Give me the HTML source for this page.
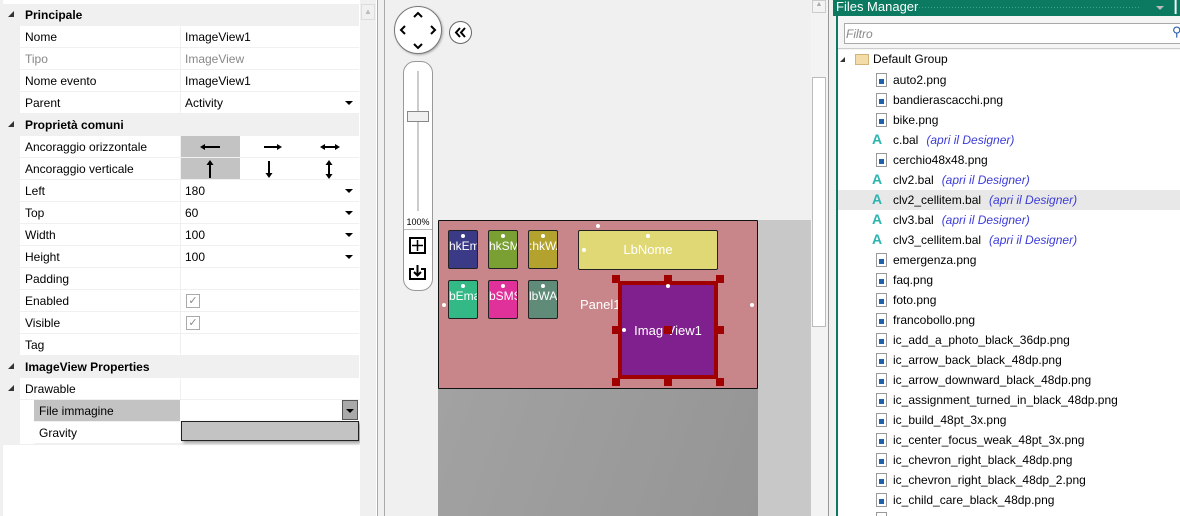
<!DOCTYPE html>
<html style="overflow:hidden;width:1180px;height:516px"><head><meta charset="utf-8"><style>
*{margin:0;padding:0;box-sizing:border-box}
body{width:1180px;height:516px;overflow:hidden;position:relative;background:#f0f0f0;font-family:"Segoe UI","Liberation Sans",sans-serif;font-size:12px;color:#000}
.a{position:absolute}
.r{position:absolute;left:20px;width:339px;height:22px;border-bottom:1px solid #f0f0f0;background:#fff}
.r .l{position:absolute;left:5px;top:4px;white-space:nowrap}
.r .v{position:absolute;left:165px;top:4px;white-space:nowrap}
.r .c{position:absolute;left:160px;top:0;width:1px;height:22px;background:#f0f0f0}
.h{position:absolute;left:20px;width:339px;height:22px;background:#f0f0f0;font-weight:bold}
.h span{position:absolute;left:5px;top:4px}
.tri{position:absolute;left:8px;width:0;height:0;border-left:6px solid transparent;border-bottom:6px solid #333}
.dd{position:absolute;right:6px;top:9px;width:0;height:0;border-left:4px solid transparent;border-right:4px solid transparent;border-top:4px solid #000}
.chk{position:absolute;left:166px;top:4px;width:14px;height:14px;border:1px solid #aaa;color:#888;font-size:11px;line-height:12px;text-align:center}
.f{position:absolute;left:876px;height:20px;white-space:nowrap;font-size:12px}
.f i{position:absolute;left:0;top:3px;width:11px;height:14px;border:1px solid #999;background:#fff}
.f i:after{content:"";position:absolute;left:2px;top:5px;width:5px;height:5px;background:#1d5fa8}
.f b{position:absolute;left:-4px;top:1px;font-weight:bold;color:#2bb4b0;font-size:14px;font-style:normal}
.f span{position:absolute;left:17px;top:3px}
.f em{color:#3b3bd8;margin-left:8px}
.dot{position:absolute;width:4px;height:4px;border-radius:2px;background:#fff}
.hd{position:absolute;width:8px;height:8px;background:#a00000}
.sm{position:absolute;width:30px;height:39px;border:1px solid #222;border-radius:2px;color:#fff;font-size:12px;overflow:hidden;text-align:center;line-height:30px}
</style></head><body>
<div class="a" style="left:0;top:0;width:378px;height:516px;background:#fff;border-left:3px solid #f0f0f0;border-right:1px solid #aaa"></div>
<div class="a" style="left:3px;top:4px;width:17px;height:440px;background:#f0f0f0"></div>
<div class="a" style="left:3px;top:444px;width:356px;height:1px;background:#f0f0f0"></div>
<div class="h" style="top:4px"><span>Principale</span></div><div class="tri" style="top:11px"></div>
<div class="r" style="top:26px"><div class="c"></div><span class="l">Nome</span><span class="v">ImageView1</span></div>
<div class="r" style="top:48px;color:#888"><div class="c"></div><span class="l">Tipo</span><span class="v">ImageView</span></div>
<div class="r" style="top:70px"><div class="c"></div><span class="l">Nome evento</span><span class="v">ImageView1</span></div>
<div class="r" style="top:92px"><div class="c"></div><span class="l">Parent</span><span class="v">Activity</span><div class="dd"></div></div>
<div class="h" style="top:114px"><span>Proprietà comuni</span></div><div class="tri" style="top:121px"></div>
<div class="r" style="top:136px"><div class="c"></div><span class="l">Ancoraggio orizzontale</span>
<div class="a" style="left:161px;top:0;width:59px;height:21px;background:#c3c3c3"></div>
<svg class="a" style="left:180px;top:5px" width="150" height="12"><g stroke="#000" stroke-width="2" fill="#000"><path d="M4 6h16"/><path d="M0 6l5-3v6z" stroke-width="0"/><path d="M64 6h14"/><path d="M82 6l-5-3v6z" stroke-width="0"/><path d="M124 6h12"/><path d="M120 6l5-3v6zM140 6l-5-3v6z" stroke-width="0"/></g></svg></div>
<div class="r" style="top:158px"><div class="c"></div><span class="l">Ancoraggio verticale</span>
<div class="a" style="left:161px;top:0;width:59px;height:21px;background:#c3c3c3"></div>
<svg class="a" style="left:185px;top:2px" width="150" height="19"><g stroke="#000" stroke-width="2" fill="#000"><path d="M5 4v14"/><path d="M5 0l-3.5 5h7z" stroke-width="0"/><path d="M64 1v13"/><path d="M64 18l-3.5-5h7z" stroke-width="0"/><path d="M124 4v11"/><path d="M124 0l-3.5 5h7zM124 19l-3.5-5h7z" stroke-width="0"/></g></svg></div>
<div class="r" style="top:180px"><div class="c"></div><span class="l">Left</span><span class="v">180</span><div class="dd"></div></div>
<div class="r" style="top:202px"><div class="c"></div><span class="l">Top</span><span class="v">60</span><div class="dd"></div></div>
<div class="r" style="top:224px"><div class="c"></div><span class="l">Width</span><span class="v">100</span><div class="dd"></div></div>
<div class="r" style="top:246px"><div class="c"></div><span class="l">Height</span><span class="v">100</span><div class="dd"></div></div>
<div class="r" style="top:268px"><div class="c"></div><span class="l">Padding</span></div>
<div class="r" style="top:290px"><div class="c"></div><span class="l">Enabled</span><div class="chk">✓</div></div>
<div class="r" style="top:312px"><div class="c"></div><span class="l">Visible</span><div class="chk">✓</div></div>
<div class="r" style="top:334px"><div class="c"></div><span class="l">Tag</span></div>
<div class="h" style="top:356px"><span>ImageView Properties</span></div><div class="tri" style="top:363px"></div>
<div class="r" style="top:378px"><div class="c"></div><span class="l">Drawable</span></div><div class="tri" style="top:385px"></div>
<div class="r" style="top:400px;left:34px;width:325px"><div class="a" style="left:0;top:0;width:146px;height:21px;background:#c3c3c3"></div><span class="l">File immagine</span>
<div class="a" style="left:308px;top:0;width:16px;height:20px;background:#aaa;border:1px solid #555"><div class="dd" style="right:3px;top:8px"></div></div></div>
<div class="r" style="top:422px;left:34px;width:325px"><span class="l">Gravity</span></div>
<div class="a" style="left:181px;top:421px;width:178px;height:20px;background:#c3c3c3;border:1px solid #222;box-shadow:2px 2px 3px #999"></div>
<div class="a" style="left:360px;top:0;width:16px;height:516px;background:#f0f0f0"></div>
<div class="a" style="left:361px;top:4px;width:14px;height:16px;border:1px solid #ddd;color:#bbb;font-size:8px;text-align:center;line-height:14px">▲</div>
<div class="a" style="left:384px;top:0;width:1px;height:516px;background:#aaa"></div>
<div class="a" style="left:385px;top:0;width:426px;height:516px;background:#f0f0f0"></div>
<div class="a" style="left:758px;top:220px;width:53px;height:296px;background:#c8c8c8"></div>
<div class="a" style="left:438px;top:388px;width:320px;height:128px;background:linear-gradient(110deg,#a2a2a2,#959595)"></div>
<div class="a" style="left:438px;top:220px;width:320px;height:169px;background:#c8868b;border:1px solid #111;border-radius:1px"></div>
<div class="dot" style="left:596px;top:224px"></div><div class="dot" style="left:442px;top:303px"></div><div class="dot" style="left:750px;top:303px"></div>
<div class="sm" style="left:448px;top:230px;background:#3b3a86">hkEmai</div>
<div class="sm" style="left:488px;top:230px;background:#7a9f33">hkSM</div>
<div class="sm" style="left:528px;top:230px;background:#b3a22e">:hkWA</div>
<div class="sm" style="left:448px;top:280px;background:#33b986">bEma</div>
<div class="sm" style="left:488px;top:280px;background:#e0309a">bSMS</div>
<div class="sm" style="left:528px;top:280px;background:#5f8b78">lbWA</div>
<div class="dot" style="left:461px;top:234px"></div><div class="dot" style="left:501px;top:234px"></div><div class="dot" style="left:541px;top:234px"></div>
<div class="dot" style="left:461px;top:284px"></div><div class="dot" style="left:501px;top:284px"></div><div class="dot" style="left:541px;top:284px"></div>
<div class="a" style="left:578px;top:230px;width:140px;height:40px;background:#e0d874;border:1px solid #222;border-radius:2px;color:#fff;font-size:13px;text-align:center;line-height:38px">LbNome</div>
<div class="dot" style="left:646px;top:234px"></div><div class="dot" style="left:582px;top:248px"></div>
<div class="a" style="left:580px;top:297px;color:#fff;font-size:13px">Panel1</div>
<div class="a" style="left:618px;top:281px;width:100px;height:98px;background:#80208f;border:4px solid #a00000;color:#fff;font-size:13px;text-align:center;line-height:92px">Imag View1</div>
<div class="dot" style="left:666px;top:284px"></div><div class="dot" style="left:622px;top:328px"></div>
<div class="hd" style="left:612px;top:275px"></div><div class="hd" style="left:664px;top:275px"></div><div class="hd" style="left:716px;top:275px"></div>
<div class="hd" style="left:612px;top:326px"></div><div class="hd" style="left:664px;top:326px"></div><div class="hd" style="left:716px;top:326px"></div>
<div class="hd" style="left:612px;top:378px"></div><div class="hd" style="left:664px;top:378px"></div><div class="hd" style="left:716px;top:378px"></div>
<div class="a" style="left:394px;top:6px;width:48px;height:48px;border-radius:50%;background:#fff;border:1px solid #777;box-shadow:1px 1px 2px #aaa"></div>
<svg class="a" style="left:394px;top:6px" width="48" height="48"><g fill="none" stroke="#000" stroke-width="2"><path d="M20 11l4-4 4 4M20 38l4 4 4-4M11 20l-4 4 4 4M37 20l4 4-4 4"/></g></svg>
<div class="a" style="left:449px;top:21px;width:23px;height:23px;border-radius:50%;background:#fff;border:1px solid #666"></div>
<svg class="a" style="left:449px;top:21px" width="23" height="23"><path d="M11 7l-4 4.5 4 4.5M16 7l-4 4.5 4 4.5" fill="none" stroke="#000" stroke-width="2"/></svg>
<div class="a" style="left:403px;top:61px;width:30px;height:230px;border-radius:12px;background:#fff;border:1px solid #999"></div>
<div class="a" style="left:417px;top:71px;width:2px;height:140px;background:#ccc"></div>
<div class="a" style="left:407px;top:111px;width:22px;height:11px;background:#f0f0f0;border:1px solid #888"></div>
<div class="a" style="left:404px;top:217px;width:28px;font-size:9px;text-align:center">100%</div>
<div class="a" style="left:404px;top:229px;width:28px;height:1px;background:#bbb"></div>
<svg class="a" style="left:409px;top:237px" width="18" height="18"><rect x="1" y="1" width="15" height="15" fill="none" stroke="#000" stroke-width="2"/><path d="M8.5 3v11M3 8.5h11" stroke="#000" stroke-width="1.5"/></svg>
<svg class="a" style="left:409px;top:263px" width="18" height="18"><path d="M5 6H1v10h15V6h-4M8.5 2v10M5 9l3.5 3.5L12 9" fill="none" stroke="#000" stroke-width="2"/></svg>
<div class="a" style="left:811px;top:0;width:17px;height:516px;background:#f3f3f3"></div>
<div class="a" style="left:812px;top:0;width:14px;height:13px;border:1px solid #ccc;color:#aaa;font-size:7px;text-align:center">▲</div>
<div class="a" style="left:812px;top:77px;width:14px;height:250px;background:#fff;border:1px solid #bbb"></div>
<div class="a" style="left:828px;top:0;width:1px;height:516px;background:#999"></div>
<div class="a" style="left:836px;top:0;width:2px;height:516px;background:#0b7a60"></div>
<div class="a" style="left:838px;top:0;width:342px;height:516px;background:#fff"></div>
<div class="a" style="left:833px;top:0;width:347px;height:16px;background:#0b7a60"></div>
<div class="a" style="left:915px;top:6px;width:225px;height:4px;background-image:radial-gradient(#3aa38a 0.6px,transparent 0.8px);background-size:3px 3px"></div>
<div class="a" style="left:836px;top:-1px;color:#fff;font-size:13px">Files Manager</div>
<div class="a" style="left:1156px;top:6px;border-left:4px solid transparent;border-right:4px solid transparent;border-top:4px solid #bbb"></div>
<div class="a" style="left:1172px;top:0;color:#fff;font-size:12px">┃</div>
<div class="a" style="left:838px;top:16px;width:342px;height:34px;background:#f5f5f5"></div>
<div class="a" style="left:844px;top:23px;width:336px;height:21px;background:#fff;border:1px solid #aaa;border-right:none"></div>
<div class="a" style="left:846px;top:27px;color:#888;font-style:italic">Filtro</div>
<div class="a" style="left:1172px;top:24px;color:#2a5caa;font-size:13px">⚲</div>
<div class="a" style="left:838px;top:48px;width:342px;height:1px;background:#ccc"></div>
<div class="a" style="left:838px;top:190px;width:342px;height:20px;background:#e8e8e8"></div>
<div class="tri" style="left:840px;top:57px;border-left-width:5px;border-bottom-width:5px"></div>
<div class="a" style="left:855px;top:54px;width:14px;height:11px;background:#f3dca8;border:1px solid #d2b478"></div>
<div class="a" style="left:873px;top:52px">Default Group</div>
<div class="f" style="top:70px"><i></i><span>auto2.png</span></div>
<div class="f" style="top:90px"><i></i><span>bandierascacchi.png</span></div>
<div class="f" style="top:110px"><i></i><span>bike.png</span></div>
<div class="f" style="top:130px"><b>A</b><span>c.bal<em>(apri il Designer)</em></span></div>
<div class="f" style="top:150px"><i></i><span>cerchio48x48.png</span></div>
<div class="f" style="top:170px"><b>A</b><span>clv2.bal<em>(apri il Designer)</em></span></div>
<div class="f" style="top:190px"><b>A</b><span>clv2_cellitem.bal<em>(apri il Designer)</em></span></div>
<div class="f" style="top:210px"><b>A</b><span>clv3.bal<em>(apri il Designer)</em></span></div>
<div class="f" style="top:230px"><b>A</b><span>clv3_cellitem.bal<em>(apri il Designer)</em></span></div>
<div class="f" style="top:250px"><i></i><span>emergenza.png</span></div>
<div class="f" style="top:270px"><i></i><span>faq.png</span></div>
<div class="f" style="top:290px"><i></i><span>foto.png</span></div>
<div class="f" style="top:310px"><i></i><span>francobollo.png</span></div>
<div class="f" style="top:330px"><i></i><span>ic_add_a_photo_black_36dp.png</span></div>
<div class="f" style="top:350px"><i></i><span>ic_arrow_back_black_48dp.png</span></div>
<div class="f" style="top:370px"><i></i><span>ic_arrow_downward_black_48dp.png</span></div>
<div class="f" style="top:390px"><i></i><span>ic_assignment_turned_in_black_48dp.png</span></div>
<div class="f" style="top:410px"><i></i><span>ic_build_48pt_3x.png</span></div>
<div class="f" style="top:430px"><i></i><span>ic_center_focus_weak_48pt_3x.png</span></div>
<div class="f" style="top:450px"><i></i><span>ic_chevron_right_black_48dp.png</span></div>
<div class="f" style="top:470px"><i></i><span>ic_chevron_right_black_48dp_2.png</span></div>
<div class="f" style="top:490px"><i></i><span>ic_child_care_black_48dp.png</span></div>
<div class="a" style="left:876px;top:512px;width:11px;height:4px;border:1px solid #999;border-bottom:none"></div>
</body></html>
